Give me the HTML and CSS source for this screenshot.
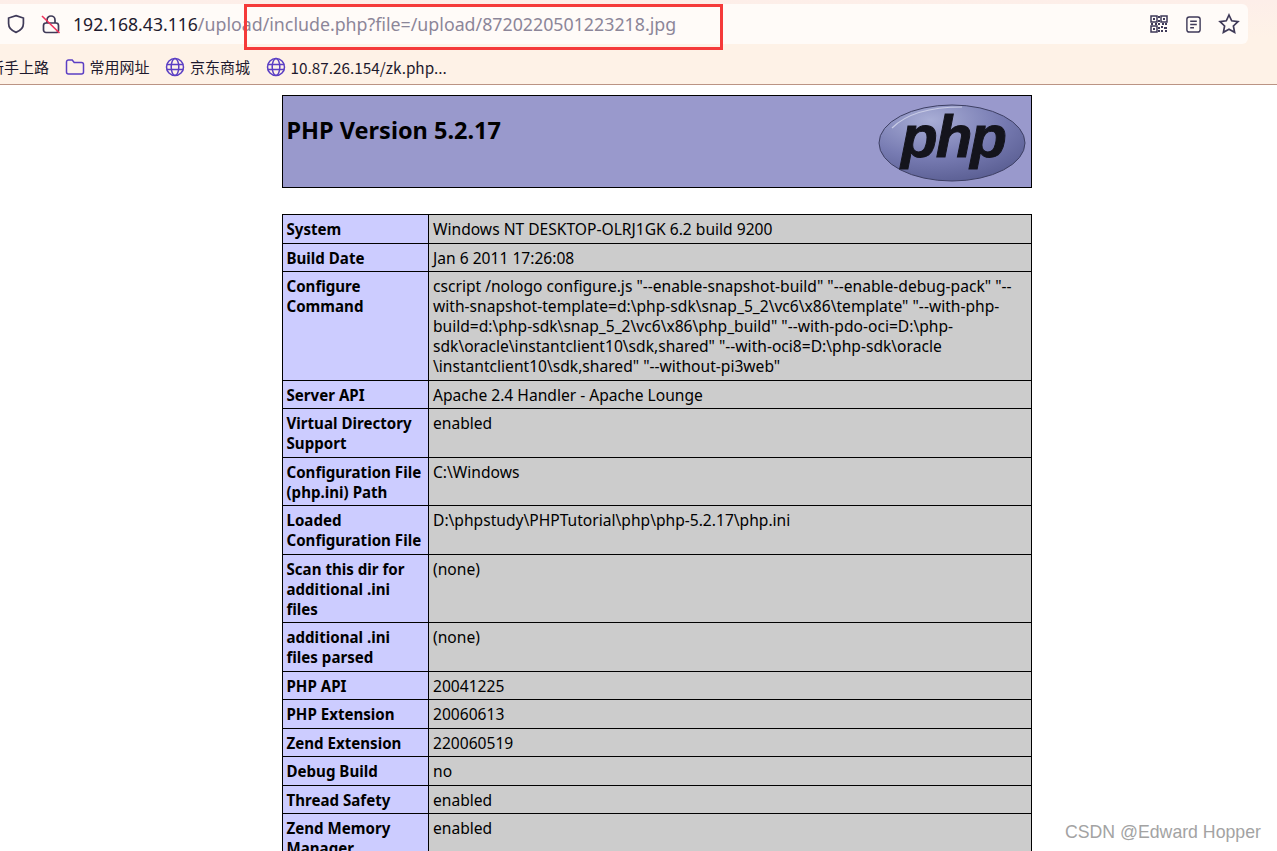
FILE: index.html
```html
<!DOCTYPE html>
<html lang="en">
<head>
<meta charset="utf-8">
<title>phpinfo()</title>
<link rel="stylesheet" href="styles.css">
</head>
<body>
<header class="chrome">
  <div class="addressbar">
    <svg class="ico shield" viewBox="0 0 20 20"><path d="M10 1.6 17.4 4v5.6c0 4.4-3.2 7.3-7.4 8.8-4.2-1.5-7.4-4.4-7.4-8.8V4z"></path></svg>
    <svg class="ico lock" viewBox="0 0 20 20"><path d="M6 9V6a4 4 0 0 1 8 0v3"></path><rect x="2.5" y="9" width="15" height="9.5" rx="2.5"></rect><path class="slash" d="M1 2 18.5 19"></path></svg>
    <div class="url"><span class="host">192.168.43.116</span><span class="path">/upload/include.php?file=/upload/8720220501223218.jpg</span></div>
    <div class="spacer"></div>
    <svg class="ico qr" viewBox="0 0 18 18"><path d="M1 1h6v6H1zM11 1h6v6h-6zM1 11h6v6H1z"></path><path class="fill" d="M3 3h2v2H3zM13 3h2v2h-2zM3 13h2v2H3zM8 1h2v2H8zM8 5h2v2H8zM1 8h2v2H1zM5 8h2v2H5zM8 8h2v2H8zM12 8h2v2h-2zM15 8h2v2h-2zM8 12h2v2H8zM11 11h2v2h-2zM14 12h3v2h-3zM11 15h2v2h-2zM8 15h2v2H8zM15 15h2v2h-2z"></path></svg>
    <svg class="ico reader" viewBox="0 0 18 20"><rect x="2" y="2" width="14" height="16" rx="2.5"></rect><path d="M5.5 6.5h7M5.5 10h7M5.5 13.5h4"></path></svg>
    <svg class="ico star" viewBox="0 0 22 22"><path d="m11 2 2.7 5.8 6.3.8-4.6 4.4 1.2 6.3L11 16.2l-5.6 3.1L6.6 13 2 8.6l6.3-.8z"></path></svg>
  </div>
  <div class="bookmarks">
    <span class="mark">新手上路</span>
    <span class="mark"><svg class="bm" viewBox="0 0 20 18"><path d="M1.5 4a2 2 0 0 1 2-2h3.7l2 2.5h7.3a2 2 0 0 1 2 2V14a2 2 0 0 1-2 2h-13a2 2 0 0 1-2-2z"></path></svg>常用网址</span>
    <span class="mark"><svg class="bm" viewBox="0 0 20 20"><circle cx="10" cy="10" r="8.5"></circle><ellipse cx="10" cy="10" rx="3.8" ry="8.5"></ellipse><path d="M1.5 7.5h17M1.5 12.5h17"></path></svg>京东商城</span>
    <span class="mark"><svg class="bm" viewBox="0 0 20 20"><circle cx="10" cy="10" r="8.5"></circle><ellipse cx="10" cy="10" rx="3.8" ry="8.5"></ellipse><path d="M1.5 7.5h17M1.5 12.5h17"></path></svg><span class="latin">10.87.26.154/zk.php...</span></span>
  </div>
</header>
<div class="highlight"></div>
<main class="page">
  <div class="banner">
    <h1>PHP Version 5.2.17</h1>
    <svg class="logo" viewBox="0 0 148 78">
      <defs>
        <radialGradient id="oval" cx="0.35" cy="0.2" r="0.9">
          <stop offset="0" stop-color="#a9aed6"></stop>
          <stop offset="0.55" stop-color="#777bb2"></stop>
          <stop offset="1" stop-color="#565a8e"></stop>
        </radialGradient>
      </defs>
      <ellipse cx="74" cy="39" rx="73" ry="38" fill="url(#oval)" stroke="#3d3f63" stroke-width="1"></ellipse>
      <path class="shine" d="M14 24C30 8 56 3 84 3"></path>
      <text x="75" y="53" text-anchor="middle" class="logotext">php</text>
    </svg>
  </div>
  <table class="info">
    <tr><th>System</th><td>Windows NT DESKTOP-OLRJ1GK 6.2 build 9200</td></tr>
    <tr><th>Build Date</th><td>Jan 6 2011 17:26:08</td></tr>
    <tr><th>Configure Command</th><td>cscript /nologo configure.js "--enable-snapshot-build" "--enable-debug-pack" "--with-snapshot-template=d:\php-sdk\snap_5_2\vc6\x86\template" "--with-php-build=d:\php-sdk\snap_5_2\vc6\x86\php_build" "--with-pdo-oci=D:\php-sdk\oracle\instantclient10\sdk,shared" "--with-oci8=D:\php-sdk\oracle<br>\instantclient10\sdk,shared" "--without-pi3web"</td></tr>
    <tr><th>Server API</th><td>Apache 2.4 Handler - Apache Lounge</td></tr>
    <tr><th>Virtual Directory Support</th><td>enabled</td></tr>
    <tr><th>Configuration File (php.ini) Path</th><td>C:\Windows</td></tr>
    <tr><th>Loaded Configuration File</th><td>D:\phpstudy\PHPTutorial\php\php-5.2.17\php.ini</td></tr>
    <tr><th>Scan this dir for additional .ini files</th><td>(none)</td></tr>
    <tr><th>additional .ini files parsed</th><td>(none)</td></tr>
    <tr><th>PHP API</th><td>20041225</td></tr>
    <tr><th>PHP Extension</th><td>20060613</td></tr>
    <tr><th>Zend Extension</th><td>220060519</td></tr>
    <tr><th>Debug Build</th><td>no</td></tr>
    <tr><th>Thread Safety</th><td>enabled</td></tr>
    <tr><th>Zend Memory Manager</th><td>enabled</td></tr>
  </table>
</main>
<div class="watermark">CSDN @Edward Hopper</div>
</body>
</html>
```
FILE: styles.css
```css
* { box-sizing: border-box; }
html, body { margin: 0; height: 851px; overflow: hidden; background: #fff; }
body { font-family: "Noto Sans", "Noto Sans CJK SC", sans-serif; color: #000; }

.chrome {
  display: flex;
  flex-direction: column;
  height: 85px;
  padding-top: 4px;
  background: linear-gradient(#fdeee9, #fef2e7 45%);
  border-bottom: 1px solid #bb9484;
}
.addressbar {
  flex: none;
  width: 1248px;
  height: 40px;
  display: flex;
  align-items: center;
  padding-left: 6px;
  background: #fffbf8;
  border-radius: 0 6px 6px 0;
}
.ico { fill: none; stroke: #3f3a58; stroke-width: 1.7; flex: none; }
.shield { width: 20px; height: 20px; }
.lock { width: 20px; height: 20px; margin-left: 15px; }
.lock .slash { stroke: #f0315a; stroke-width: 1.6; }
.url {
  margin-left: 12px;
  color: #8c8699;
  white-space: nowrap;
}
.host { color: #1e1a2e; font-size: 17.6px; }
.path { font-size: 17.8px; }
.spacer { flex: 1; }
.qr { width: 18px; height: 18px; stroke-width: 1.5; }
.qr .fill { fill: #3f3a58; stroke: none; }
.reader { width: 17px; height: 19px; margin-left: 17px; stroke-width: 1.5; }
.star { width: 22px; height: 22px; margin: 0 8px 0 16px; }

.bookmarks {
  flex: none;
  height: 40px;
  padding-top: 5px;
  margin-left: -11px;
  display: flex;
  align-items: center;
  gap: 15.5px;
  font: 15px "Noto Sans CJK SC", "Noto Sans", sans-serif;
  color: #1e1a2e;
  white-space: nowrap;
}
.mark { display: flex; align-items: center; gap: 5px; }
.latin { font-size: 15.3px; }
.bm { fill: none; stroke: #5b3fc4; stroke-width: 1.5; flex: none; width: 20px; height: 20px; }

.highlight {
  position: absolute;
  left: 244px;
  top: 4px;
  width: 479px;
  height: 46px;
  border: 3px solid #f53a3a;
}

.page { width: 750px; margin: 10px 0 0 282px; }
.banner {
  height: 93px;
  display: flex;
  justify-content: space-between;
  padding: 8px 5px 0 3.5px;
  background: #9999cc;
  border: 1px solid #000;
}
h1 { margin: 8px 0 0; font-size: 23.5px; line-height: 36px; font-weight: 700; }
.logo { width: 148px; height: 78px; }
.shine { fill: none; stroke: #c9cce6; stroke-width: 1.2; }
.logotext {
  font: italic 700 60px "Liberation Sans", sans-serif;
  letter-spacing: -2px;
  fill: #14141c;
  stroke: #14141c;
  stroke-width: 1;
}

.info {
  width: 750px;
  margin-top: 26px;
  table-layout: fixed;
  border-collapse: collapse;
  line-height: 20px;
}
.info th, .info td {
  border: 1px solid #000;
  padding: 4px 6px 3.5px 3.5px;
  text-align: left;
  vertical-align: top;
}
.info th { width: 146px; background: #ccccff; font-size: 15.1px; font-weight: 700; }
.info td { background: #cccccc; font-size: 15.6px; font-weight: 400; padding-left: 4px; padding-right: 10px; }

.watermark {
  position: absolute;
  left: 1065px;
  top: 822px;
  font: 17.7px "Liberation Sans", sans-serif;
  color: #a3a3a3;
  white-space: nowrap;
}
```
